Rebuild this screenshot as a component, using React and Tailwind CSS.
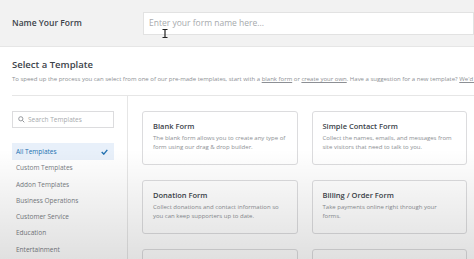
import React from "react";

const categories = [
  "Custom Templates",
  "Addon Templates",
  "Business Operations",
  "Customer Service",
  "Education",
  "Entertainment",
];

const templates = [
  {
    title: "Blank Form",
    desc: "The blank form allows you to create any type of form using our drag & drop builder.",
  },
  {
    title: "Simple Contact Form",
    desc: "Collect the names, emails, and messages from site visitors that need to talk to you.",
  },
  {
    title: "Donation Form",
    desc: "Collect donations and contact information so you can keep supporters up to date.",
  },
  {
    title: "Billing / Order Form",
    desc: "Take payments online right through your forms.",
  },
  { title: "", desc: "" },
  { title: "", desc: "" },
];

function TemplateCard({ title, desc }) {
  return (
    <div className="h-[54px] rounded-[3px] border border-[#dcdcde] bg-white px-[10px] pt-[9px]">
      <div className="text-[7.5px] font-semibold leading-[10px] text-[#3c434a]">
        {title}
      </div>
      <p className="mt-[3px] text-[6px] leading-[9px] text-[#8c8f94]">{desc}</p>
    </div>
  );
}

export default function App() {
  return (
    <div
      className="relative h-[259px] w-[474px] overflow-hidden bg-white"
      style={{ fontFamily: '"Open Sans", "Liberation Sans", sans-serif' }}
    >
      {/* name your form */}
      <div className="flex h-[47px] items-center border-b border-[#e6e6e6] bg-[#f2f2f2] pl-3">
        <div className="w-[131px] text-[8.5px] font-semibold text-[#3c434a]">
          Name Your Form
        </div>
        <div className="relative flex h-[23px] flex-1 items-center border border-[#e2e2e2] bg-white pl-[5px]">
          <span className="whitespace-nowrap text-[8.5px] text-[#a7aaad]">
            Enter your form name here...
          </span>
          <svg
            className="absolute left-[18px] top-[16px]"
            width="6"
            height="9"
            viewBox="0 0 6 9"
          >
            <path
              d="M0.5 0.5h5M3 0.5v8M0.5 8.5h5"
              stroke="#222"
              strokeWidth="1.2"
              fill="none"
            />
          </svg>
        </div>
      </div>

      {/* select a template */}
      <div className="pl-3 pt-[11px]">
        <div className="text-[9.5px] font-semibold leading-[13px] text-[#3c434a]">
          Select a Template
        </div>
        <p className="mt-[4px] whitespace-nowrap text-[6px] leading-[8px] text-[#8c8f94]">
          To speed up the process you can select from one of our pre-made
          templates, start with a <span className="underline">blank form</span>{" "}
          or <span className="underline">create your own</span>. Have a
          suggestion for a new template?{" "}
          <span className="underline">We'd love to hear it</span>.
        </p>
        <div className="mt-[12px] flex border-t border-[#e6e6e6]">
          {/* sidebar */}
          <div className="w-[116px] shrink-0 border-r border-[#e6e6e6] pr-[13px] pt-[15px]">
            <div className="flex h-[17px] items-center gap-[3px] border border-[#dcdcde] bg-white pl-[5px]">
              <svg width="7" height="7" viewBox="0 0 10 10">
                <circle
                  cx="4"
                  cy="4"
                  r="3"
                  stroke="#8c8f94"
                  strokeWidth="1.3"
                  fill="none"
                />
                <path d="M6.3 6.3L9 9" stroke="#8c8f94" strokeWidth="1.4" />
              </svg>
              <span className="text-[6.5px] text-[#a7aaad]">
                Search Templates
              </span>
            </div>
            <div className="mt-[15px] flex h-[17px] items-center justify-between bg-[#e8f0fa] pl-[4px] pr-[6px]">
              <span className="text-[6.5px] text-[#2271b1]">All Templates</span>
              <svg width="7" height="6" viewBox="0 0 10 8">
                <path
                  d="M1 4l3 3 5-6"
                  stroke="#2271b1"
                  strokeWidth="2"
                  fill="none"
                />
              </svg>
            </div>
            <ul className="pl-[4px]">
              {categories.map((c) => (
                <li
                  key={c}
                  className="flex h-[16.3px] items-center text-[6.5px] text-[#787c82]"
                >
                  {c}
                </li>
              ))}
            </ul>
          </div>

          {/* templates */}
          <div className="grid flex-1 grid-cols-2 gap-x-[14px] gap-y-[15px] pl-[14px] pr-[7px] pt-[15px]">
            {templates.map((t, i) => (
              <TemplateCard key={i} {...t} />
            ))}
          </div>
        </div>
      </div>

      {/* screen vignette */}
      <div className="pointer-events-none absolute inset-x-0 bottom-0 h-[110px] bg-gradient-to-b from-transparent to-[rgba(0,0,0,0.12)]" />
    </div>
  );
}
